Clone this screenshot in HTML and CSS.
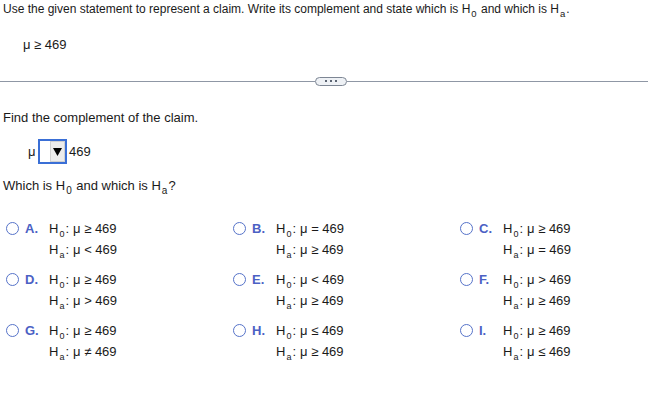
FILE: index.html
```html
<!DOCTYPE html>
<html>
<head>
<meta charset="utf-8">
<link rel="stylesheet" href="styles.css">
</head>
<body>
<div class="page">
  <p class="title">Use the given statement to represent a claim. Write its complement and state which is H<sub>0</sub> and which is H<sub>a</sub>.</p>
  <p class="claim">μ ≥ 469</p>
  <div class="divider">
    <span class="line left"></span>
    <span class="pill"><i></i><i></i><i></i></span>
    <span class="line right"></span>
  </div>
  <p class="q q1">Find the complement of the claim.</p>
  <div class="answer-row">
    <span class="mu">μ</span>
    <span class="select"><span class="btn"><svg width="9" height="9" viewBox="0 0 9 9"><polygon points="0,1 9,1 4.5,9" fill="#000"/></svg></span></span>
    <span class="num">469</span>
  </div>
  <p class="q q2">Which is H<sub>0</sub> and which is H<sub>a</sub>?</p>
  <div class="options">
    <div class="opt"><span class="radio"></span><span class="lbl">A.</span><div class="hyp"><div>H<sub>0</sub><span class="c">:</span>μ ≥ 469</div><div>H<sub>a</sub><span class="c">:</span>μ &lt; 469</div></div></div>
    <div class="opt"><span class="radio"></span><span class="lbl">B.</span><div class="hyp"><div>H<sub>0</sub><span class="c">:</span>μ = 469</div><div>H<sub>a</sub><span class="c">:</span>μ ≥ 469</div></div></div>
    <div class="opt"><span class="radio"></span><span class="lbl">C.</span><div class="hyp"><div>H<sub>0</sub><span class="c">:</span>μ ≥ 469</div><div>H<sub>a</sub><span class="c">:</span>μ = 469</div></div></div>
    <div class="opt"><span class="radio"></span><span class="lbl">D.</span><div class="hyp"><div>H<sub>0</sub><span class="c">:</span>μ ≥ 469</div><div>H<sub>a</sub><span class="c">:</span>μ &gt; 469</div></div></div>
    <div class="opt"><span class="radio"></span><span class="lbl">E.</span><div class="hyp"><div>H<sub>0</sub><span class="c">:</span>μ &lt; 469</div><div>H<sub>a</sub><span class="c">:</span>μ ≥ 469</div></div></div>
    <div class="opt"><span class="radio"></span><span class="lbl">F.</span><div class="hyp"><div>H<sub>0</sub><span class="c">:</span>μ &gt; 469</div><div>H<sub>a</sub><span class="c">:</span>μ ≥ 469</div></div></div>
    <div class="opt"><span class="radio"></span><span class="lbl">G.</span><div class="hyp"><div>H<sub>0</sub><span class="c">:</span>μ ≥ 469</div><div>H<sub>a</sub><span class="c">:</span>μ ≠ 469</div></div></div>
    <div class="opt"><span class="radio"></span><span class="lbl">H.</span><div class="hyp"><div>H<sub>0</sub><span class="c">:</span>μ ≤ 469</div><div>H<sub>a</sub><span class="c">:</span>μ ≥ 469</div></div></div>
    <div class="opt"><span class="radio"></span><span class="lbl">I.</span><div class="hyp"><div>H<sub>0</sub><span class="c">:</span>μ ≥ 469</div><div>H<sub>a</sub><span class="c">:</span>μ ≤ 469</div></div></div>
  </div>
</div>
</body>
</html>
```
FILE: styles.css
```css
* { box-sizing: border-box; }
html, body { margin: 0; padding: 0; background: #fff; }
body {
  font-family: "Liberation Sans", Arial, sans-serif;
  font-size: 13px;
  color: #1a1a1a;
  line-height: 16px;
}
.page { padding: 1px 0 0 3px; }
p { margin: 0; }
sub {
  font-size: 10px;
  line-height: 0;
  vertical-align: -4px;
  margin: 0 1px 0 1px;
}
.title { font-size: 12px; }
.title sub { font-size: 9.5px; }
.claim { margin: 20px 0 0 20px; }
.divider {
  display: flex;
  align-items: center;
  margin: 23px 0 0 -3px;
  height: 10px;
}
.line { height: 1px; background: #8f97a5; }
.line.left { width: 315px; }
.line.right { flex: 1; }
.pill {
  width: 32px;
  height: 9px;
  border: 1px solid #7d8694;
  border-radius: 5px;
  background: #eef1f5;
  display: flex;
  align-items: center;
  justify-content: center;
  gap: 3px;
}
.pill i {
  width: 2px; height: 2px; background: #5b6472; display: block;
}
.q1 { margin-top: 24px; }
.answer-row {
  display: flex;
  align-items: center;
  margin: 13px 0 0 25px;
  height: 25px;
}
.mu { width: 10px; }
.select {
  width: 29px;
  height: 25px;
  border: 2px solid #3a6fd6;
  display: flex;
  justify-content: flex-end;
  align-items: center;
}
.btn {
  width: 15px;
  height: 21px;
  background: #ececec;
  border: 1px solid #d0d0d0;
  display: flex;
  align-items: center;
  justify-content: center;
}
.num { margin-left: 2px; }
.q2 { margin-top: 14px; }
.options {
  display: grid;
  grid-template-columns: 227px 227px 190px;
  row-gap: 9px;
  margin: 24px 0 0 3px;
}
.opt {
  display: flex;
  align-items: flex-start;
  line-height: 21px;
}
.radio {
  width: 13px;
  height: 13px;
  border: 1.5px solid #5673c9;
  border-radius: 50%;
  margin-top: 4px;
  flex: none;
}
.lbl {
  color: #4b61c4;
  font-weight: bold;
  margin-left: 6px;
  width: 24px;
}
.hyp div { white-space: nowrap; }
.hyp sub { font-size: 9px; margin-right: 1px; }
.c { margin-right: 4px; }
```
